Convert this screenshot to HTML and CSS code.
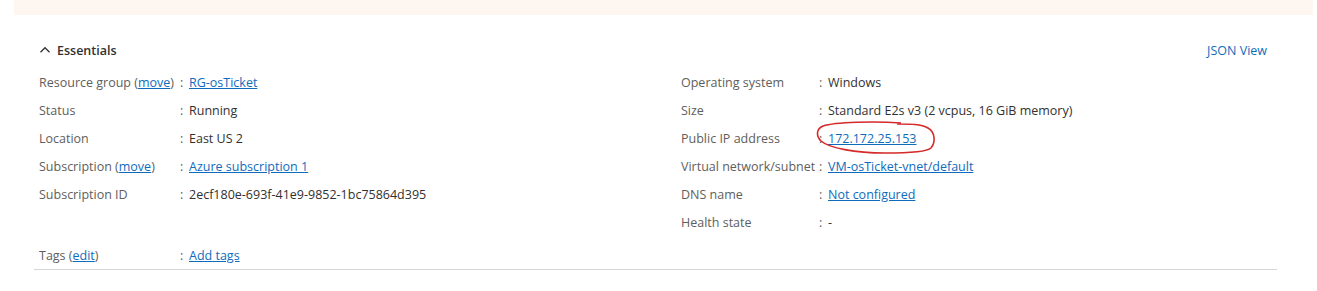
FILE: index.html
```html
<!DOCTYPE html>
<html lang="en">

<head>
    <meta charset="UTF-8">
    <meta name="viewport" content="width=device-width, initial-scale=1.0">
    <title>Virtual machine - Essentials</title>
    <link rel="stylesheet" href="styles.css">
</head>

<body>

    <div class="banner"></div>

    <div class="essentials">
        <div class="header">
            <button class="toggle">
                <svg width="12" height="12" viewBox="0 0 12 12">
                    <path d="M1.5 8.2 L6 3.7 L10.5 8.2" fill="none" stroke="#323130" stroke-width="1.3" />
                </svg>
                Essentials
            </button>
            <a href="#" class="json">JSON View</a>
        </div>

        <div class="cols">
            <div class="col">
                <div class="row"><span class="label">Resource group (<a href="#">move</a>)</span><span class="colon">:</span><a href="#" class="value">RG-osTicket</a></div>
                <div class="row"><span class="label">Status</span><span class="colon">:</span><span class="value">Running</span></div>
                <div class="row"><span class="label">Location</span><span class="colon">:</span><span class="value">East US 2</span></div>
                <div class="row"><span class="label">Subscription (<a href="#">move</a>)</span><span class="colon">:</span><a href="#" class="value">Azure subscription 1</a></div>
                <div class="row"><span class="label">Subscription ID</span><span class="colon">:</span><span class="value">2ecf180e-693f-41e9-9852-1bc75864d395</span></div>
            </div>
            <div class="col right">
                <div class="row"><span class="label">Operating system</span><span class="colon">:</span><span class="value">Windows</span></div>
                <div class="row"><span class="label">Size</span><span class="colon">:</span><span class="value">Standard E2s v3 (2 vcpus, 16 GiB memory)</span></div>
                <div class="row"><span class="label">Public IP address</span><span class="colon">:</span><a href="#" class="value ip">172.172.25.153
                    <svg class="circle" width="124" height="36" viewBox="0 0 124 36">
                        <path d="M86 3 C60 1 20 2 8 6 C1 9 1 16 6 21 C14 28 40 33 70 33 C95 33 112 32 116 28 C121 22 120 12 113 8 C106 4 96 4 82 4"
                            fill="none" stroke="#d42a2a" stroke-width="1.6" />
                    </svg>
                </a></div>
                <div class="row"><span class="label">Virtual network/subnet</span><span class="colon">:</span><a href="#" class="value">VM-osTicket-vnet/default</a></div>
                <div class="row"><span class="label">DNS name</span><span class="colon">:</span><a href="#" class="value">Not configured</a></div>
                <div class="row"><span class="label">Health state</span><span class="colon">:</span><span class="value">-</span></div>
            </div>
        </div>

        <div class="row tags"><span class="label">Tags (<a href="#">edit</a>)</span><span class="colon">:</span><a href="#" class="value">Add tags</a></div>
    </div>

</body>

</html>
```

FILE: styles.css
```css
body {
    margin: 0;
    font-family: "Open Sans", "Noto Sans", sans-serif;
    font-size: 12.5px;
    color: #323130;
    background-color: #fff;
}

a {
    color: #0f6cbd;
    text-decoration: underline;
}

.banner {
    margin-left: 14px;
    width: 1299px;
    height: 15px;
    background-color: #fef6f0;
}

.essentials {
    margin: 21px 40px 0 34px;
    border-bottom: 1px solid #d6d6d6;
}

.header {
    display: flex;
    justify-content: space-between;
    align-items: center;
    height: 28px;
    padding: 0 10px 0 5px;
    margin-bottom: 4px;
}

.toggle {
    display: flex;
    align-items: center;
    gap: 6px;
    padding: 0;
    border: none;
    background: none;
    font-family: inherit;
    font-size: 12.5px;
    font-weight: 600;
    color: #323130;
}

.json {
    text-decoration: none;
    color: #0f6cbd;
}

.cols {
    display: flex;
    padding-left: 5px;
}

.col {
    flex: 0 0 642px;
}

.col.right {
    flex: 1;
}

.row {
    display: flex;
    align-items: center;
    height: 28px;
    white-space: nowrap;
}

.label {
    flex: 0 0 141px;
    color: #605e5c;
}

.right .label {
    flex-basis: 138px;
}

.colon {
    flex: 0 0 9px;
    color: #605e5c;
}

.value {
    color: #323130;
}

a.value {
    color: #0f6cbd;
}

.ip {
    position: relative;
}

.circle {
    position: absolute;
    left: -13px;
    top: -10px;
}

.tags {
    margin-top: 5px;
    padding-left: 5px;
}
```
